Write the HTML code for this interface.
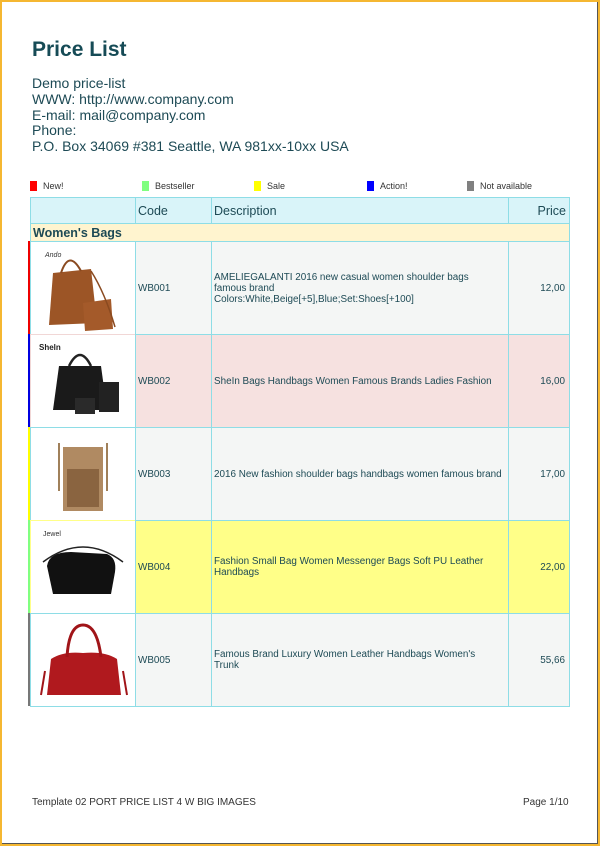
<!DOCTYPE html>
<html><head><meta charset="utf-8"><style>
*{margin:0;padding:0;box-sizing:border-box}
body{width:600px;height:846px;background:#fff;font-family:"Liberation Sans",sans-serif;color:#1d4a55;position:relative;overflow:hidden}
.frame{position:absolute;left:0;top:0;width:600px;height:846px;border:2px solid #f5b731;}
.frame:after{content:"";position:absolute;left:0;top:0;right:0;bottom:0;border-right:1px solid #555;border-bottom:1px solid #555}
.a{position:absolute;white-space:nowrap}
h1{position:absolute;left:32px;top:38px;font-size:21px;font-weight:bold;color:#164b56}
.info{position:absolute;left:32px;top:76px;font-size:14px;line-height:15.8px;color:#1d4a55}
.lg{position:absolute;top:181px;font-size:9px;color:#333;}
.lg i{position:absolute;left:-13px;top:0;width:7px;height:10px}
.c{position:absolute;border:1px solid #8edde6;font-size:9.9px;display:flex;align-items:center;padding-left:2px}
.h{background:#d9f4f9;font-size:12.5px;font-weight:normal;color:#1d4a55}
.bar{position:absolute;left:28px;width:3px}
</style></head><body>
<div class="frame"></div>
<h1>Price List</h1>
<div class="info">Demo price-list<br>WWW: http://www.company.com<br>E-mail: mail@company.com<br>Phone:<br>P.O. Box 34069 #381 Seattle, WA 981xx-10xx USA</div>
<div class="lg" style="left:43px"><i style="background:#f00"></i>New!</div>
<div class="lg" style="left:155px"><i style="background:#80ff80"></i>Bestseller</div>
<div class="lg" style="left:267px"><i style="background:#ff0"></i>Sale</div>
<div class="lg" style="left:380px"><i style="background:#00f"></i>Action!</div>
<div class="lg" style="left:480px"><i style="background:#808080"></i>Not available</div>

<div class="c h" style="left:30px;top:197px;width:106px;height:27px"></div>
<div class="c h" style="left:135px;top:197px;width:77px;height:27px">Code</div>
<div class="c h" style="left:211px;top:197px;width:298px;height:27px">Description</div>
<div class="c h" style="left:508px;top:197px;width:62px;height:27px;justify-content:flex-end;padding-right:3px">Price</div>
<div class="c" style="left:30px;top:223px;width:540px;height:19px;background:#fff4cf;font-size:12.5px;font-weight:bold;color:#1d4a55">Women's Bags</div>

<div class="bar" style="top:241px;height:93px;background:#e00"></div>
<div class="bar" style="top:334px;height:93px;background:#0000e0"></div>
<div class="bar" style="top:427px;height:93px;background:#ff0"></div>
<div class="bar" style="top:520px;height:93px;background:#80ff80"></div>
<div class="bar" style="top:613px;height:93px;background:#777"></div>

<div class="c" style="left:30px;top:241px;width:106px;height:94px;background:#fff"><svg width="100" height="90" viewBox="0 0 100 90"><path d="M20 30 L58 26 L64 80 L16 82Z" fill="#9c5526"/><path d="M50 60 L78 56 L80 86 L52 88Z" fill="#a45a2a"/><path d="M28 30 Q36 6 48 28" stroke="#8a4a20" stroke-width="2" fill="none"/><path d="M58 28 Q72 50 82 84" stroke="#8a4a20" stroke-width="1.5" fill="none"/><text x="12" y="14" font-size="7" font-style="italic" fill="#333">Ando</text></svg></div>
<div class="c" style="left:135px;top:241px;width:77px;height:94px;background:#f4f6f5">WB001</div>
<div class="c" style="left:211px;top:241px;width:298px;height:94px;background:#f4f6f5;line-height:11px">AMELIEGALANTI 2016 new casual women shoulder bags<br>famous brand<br>Colors:White,Beige[+5],Blue;Set:Shoes[+100]</div>
<div class="c" style="left:508px;top:241px;width:62px;height:94px;background:#f4f6f5;justify-content:flex-end;padding-right:4px">12,00</div>

<div class="c" style="left:30px;top:334px;width:106px;height:94px;background:#fff;border-color:#f1d7d6"><svg width="100" height="90" viewBox="0 0 100 90"><path d="M26 30 L68 30 L74 74 L20 74Z" fill="#1a1a1a"/><path d="M36 30 Q47 8 58 30" stroke="#222" stroke-width="2.5" fill="none"/><rect x="66" y="46" width="20" height="30" fill="#222"/><rect x="42" y="62" width="20" height="16" fill="#2a2a2a"/><text x="6" y="14" font-size="8" font-weight="bold" fill="#222">Sheln</text></svg></div>
<div class="c" style="left:135px;top:334px;width:77px;height:94px;background:#f6e1e0">WB002</div>
<div class="c" style="left:211px;top:334px;width:298px;height:94px;background:#f6e1e0">SheIn Bags Handbags Women Famous Brands Ladies Fashion</div>
<div class="c" style="left:508px;top:334px;width:62px;height:94px;background:#f6e1e0;justify-content:flex-end;padding-right:4px">16,00</div>

<div class="c" style="left:30px;top:427px;width:106px;height:94px;background:#fff"><svg width="100" height="90" viewBox="0 0 100 90"><path d="M30 18 L70 18 L70 82 L30 82Z" fill="#b08a62"/><rect x="34" y="40" width="32" height="38" fill="#8a6440"/><path d="M26 14 L26 62 M74 14 L74 62" stroke="#a0805a" stroke-width="2"/></svg></div>
<div class="c" style="left:135px;top:427px;width:77px;height:94px;background:#f4f6f5">WB003</div>
<div class="c" style="left:211px;top:427px;width:298px;height:94px;background:#f4f6f5">2016 New fashion shoulder bags handbags women famous brand</div>
<div class="c" style="left:508px;top:427px;width:62px;height:94px;background:#f4f6f5;justify-content:flex-end;padding-right:4px">17,00</div>

<div class="c" style="left:30px;top:520px;width:106px;height:94px;background:#fff;border-color:#ffff88"><svg width="100" height="90" viewBox="0 0 100 90"><path d="M14 44 Q16 30 38 30 L74 32 Q84 36 82 50 L78 72 L20 72Z" fill="#111"/><path d="M10 40 Q50 10 90 40" stroke="#222" stroke-width="1.5" fill="none"/><text x="10" y="14" font-size="7" fill="#333">Jewel</text></svg></div>
<div class="c" style="left:135px;top:520px;width:77px;height:94px;background:#ffff88">WB004</div>
<div class="c" style="left:211px;top:520px;width:298px;height:94px;background:#ffff88;line-height:11px">Fashion Small Bag Women Messenger Bags Soft PU Leather<br>Handbags</div>
<div class="c" style="left:508px;top:520px;width:62px;height:94px;background:#ffff88;justify-content:flex-end;padding-right:4px">22,00</div>

<div class="c" style="left:30px;top:613px;width:106px;height:94px;background:#fff"><svg width="100" height="90" viewBox="0 0 100 90"><path d="M18 44 Q30 36 50 38 Q72 36 84 44 L88 80 L14 80Z" fill="#b0191e"/><path d="M34 42 Q36 10 50 10 Q64 10 68 42" stroke="#a01418" stroke-width="3" fill="none"/><path d="M12 56 L8 80 M90 56 L94 80" stroke="#a01418" stroke-width="2"/></svg></div>
<div class="c" style="left:135px;top:613px;width:77px;height:94px;background:#f4f6f5">WB005</div>
<div class="c" style="left:211px;top:613px;width:298px;height:94px;background:#f4f6f5;line-height:11px">Famous Brand Luxury Women Leather Handbags Women's<br>Trunk</div>
<div class="c" style="left:508px;top:613px;width:62px;height:94px;background:#f4f6f5;justify-content:flex-end;padding-right:4px">55,66</div>

<div class="a" style="left:32px;top:797px;font-size:10px;color:#333">Template 02 PORT PRICE LIST 4 W BIG IMAGES</div>
<div class="a" style="left:523px;top:797px;font-size:10px;color:#333">Page 1/10</div>
</body></html>
